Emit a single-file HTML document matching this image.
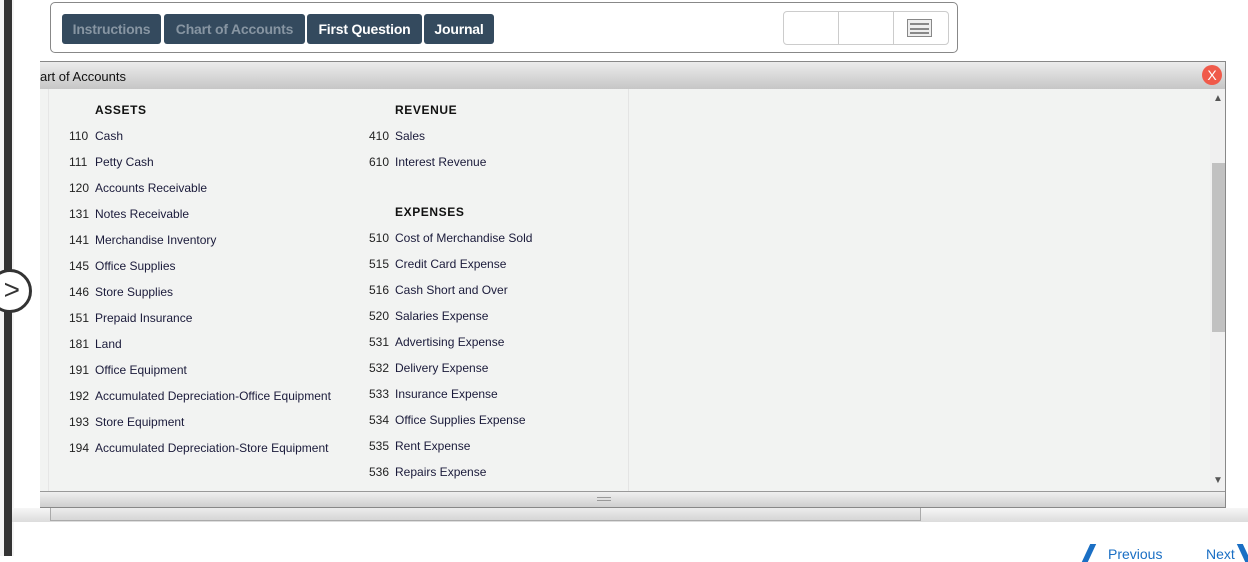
<!DOCTYPE html>
<html><head><style>
*{box-sizing:border-box;margin:0;padding:0}
body{width:1248px;height:556px;overflow:hidden;background:#fff;font-family:"Liberation Sans",Arial,sans-serif;position:relative}
.abs{position:absolute}
.btn{position:absolute;top:14px;height:30px;background:#344a5e;border-radius:3px;color:#fff;font-weight:bold;font-size:14px;line-height:30px;text-align:center;letter-spacing:-0.2px}
.dim{color:#8795a2}
.row{position:absolute;font-size:12px;color:#1a1a3a;white-space:nowrap}
.row b{font-weight:normal;display:inline-block;width:26px;color:#222}
.hd{position:absolute;font-size:12px;font-weight:bold;letter-spacing:0.6px;color:#111}
</style></head><body>
<div class="abs" style="left:0;top:0;width:14px;height:556px;background:#f4f4f4"></div>
<div class="abs" style="left:4px;top:0;width:8px;height:556px;background:#333"></div>
<div class="abs" style="left:12px;top:508px;width:1236px;height:14px;background:linear-gradient(#f6f6f6,#dcdcdc)"></div>
<div class="abs" style="left:50px;top:2px;width:908px;height:51px;border:1px solid #888;border-radius:5px;background:#fff"></div>
<div class="btn dim" style="left:62px;width:99px">Instructions</div>
<div class="btn dim" style="left:164px;width:141px">Chart of Accounts</div>
<div class="btn" style="left:307px;width:115px">First Question</div>
<div class="btn" style="left:424px;width:70px">Journal</div>
<div class="abs" style="left:783px;top:11px;width:166px;height:34px;border:1px solid #ccc;border-radius:4px;background:#fff"></div>
<div class="abs" style="left:838px;top:11px;width:1px;height:34px;background:#ccc"></div>
<div class="abs" style="left:893px;top:11px;width:1px;height:34px;background:#ccc"></div>
<div class="abs" style="left:907px;top:19px;width:25px;height:18px;border:1px solid #888;background:#eee"><div style="margin:3px 2px;height:2px;background:#888"></div><div style="margin:0 2px 2px;height:2px;background:#888"></div><div style="margin:0 2px;height:2px;background:#888"></div></div>
<div class="abs" style="left:50px;top:507px;width:871px;height:14px;border:1px solid #aaa;border-top:none;background:linear-gradient(#eee,#d6d6d6)"></div>
<div class="abs" style="left:40px;top:61px;width:1186px;height:447px;border:1px solid #888;border-left:none;background:#f2f3f2"></div>
<div class="abs" style="left:40px;top:62px;width:1185px;height:27px;background:linear-gradient(#ececec,#c6c6c6);font-size:13px;line-height:30px;color:#111">art of Accounts</div>
<div class="abs" style="left:1202px;top:65px;width:20px;height:20px;border-radius:50%;background:#f05a4a;color:#fff;font-size:14px;text-align:center;line-height:20px">X</div>
<div class="abs" style="left:628px;top:89px;width:1px;height:402px;background:#e4e4e4"></div>
<div class="abs" style="left:48px;top:89px;width:1px;height:402px;background:#e6e6e6"></div>
<div class="abs" style="left:1210px;top:89px;width:15px;height:402px;background:#f0f0f0"></div>
<div class="abs" style="left:1212px;top:163px;width:13px;height:169px;background:#c1c1c1"></div>
<div class="abs" style="left:1213px;top:93px;font-size:10px;color:#555">▲</div>
<div class="abs" style="left:1213px;top:475px;font-size:10px;color:#555">▼</div>
<div class="abs" style="left:40px;top:491px;width:1185px;height:16px;border-top:1px solid #999;background:linear-gradient(#efefef,#cfcfcf)"></div>
<div class="abs" style="left:597px;top:497px;width:14px;height:1px;background:#999"></div>
<div class="abs" style="left:597px;top:500px;width:14px;height:1px;background:#999"></div>
<div class="hd" style="left:95px;top:103px">ASSETS</div>
<div class="hd" style="left:395px;top:103px">REVENUE</div>
<div class="hd" style="left:395px;top:205px">EXPENSES</div>
<div class="row" style="left:69px;top:129px"><b>110</b>Cash</div>
<div class="row" style="left:69px;top:155px"><b>111</b>Petty Cash</div>
<div class="row" style="left:69px;top:181px"><b>120</b>Accounts Receivable</div>
<div class="row" style="left:69px;top:207px"><b>131</b>Notes Receivable</div>
<div class="row" style="left:69px;top:233px"><b>141</b>Merchandise Inventory</div>
<div class="row" style="left:69px;top:259px"><b>145</b>Office Supplies</div>
<div class="row" style="left:69px;top:285px"><b>146</b>Store Supplies</div>
<div class="row" style="left:69px;top:311px"><b>151</b>Prepaid Insurance</div>
<div class="row" style="left:69px;top:337px"><b>181</b>Land</div>
<div class="row" style="left:69px;top:363px"><b>191</b>Office Equipment</div>
<div class="row" style="left:69px;top:389px"><b>192</b>Accumulated Depreciation-Office Equipment</div>
<div class="row" style="left:69px;top:415px"><b>193</b>Store Equipment</div>
<div class="row" style="left:69px;top:441px"><b>194</b>Accumulated Depreciation-Store Equipment</div>
<div class="row" style="left:369px;top:129px"><b>410</b>Sales</div>
<div class="row" style="left:369px;top:155px"><b>610</b>Interest Revenue</div>
<div class="row" style="left:369px;top:231px"><b>510</b>Cost of Merchandise Sold</div>
<div class="row" style="left:369px;top:257px"><b>515</b>Credit Card Expense</div>
<div class="row" style="left:369px;top:283px"><b>516</b>Cash Short and Over</div>
<div class="row" style="left:369px;top:309px"><b>520</b>Salaries Expense</div>
<div class="row" style="left:369px;top:335px"><b>531</b>Advertising Expense</div>
<div class="row" style="left:369px;top:361px"><b>532</b>Delivery Expense</div>
<div class="row" style="left:369px;top:387px"><b>533</b>Insurance Expense</div>
<div class="row" style="left:369px;top:413px"><b>534</b>Office Supplies Expense</div>
<div class="row" style="left:369px;top:439px"><b>535</b>Rent Expense</div>
<div class="row" style="left:369px;top:465px"><b>536</b>Repairs Expense</div>
<div class="abs" style="left:-12px;top:269px;width:44px;height:44px;border-radius:50%;border:3px solid #333;background:#fff;font-size:28px;line-height:36px;text-align:right;padding-right:9px;color:#333">&gt;</div>
<div class="abs" style="left:1086px;top:544px;width:6px;height:18px;background:#1a6fc4;transform:skewX(-25deg)"></div>
<div class="abs" style="left:1108px;top:546px;font-size:14px;color:#1a6fc4">Previous</div>
<div class="abs" style="left:1206px;top:546px;font-size:14px;color:#1a6fc4">Next</div>
<div class="abs" style="left:1241px;top:544px;width:6px;height:18px;background:#1a6fc4;transform:skewX(25deg)"></div>
</body></html>
